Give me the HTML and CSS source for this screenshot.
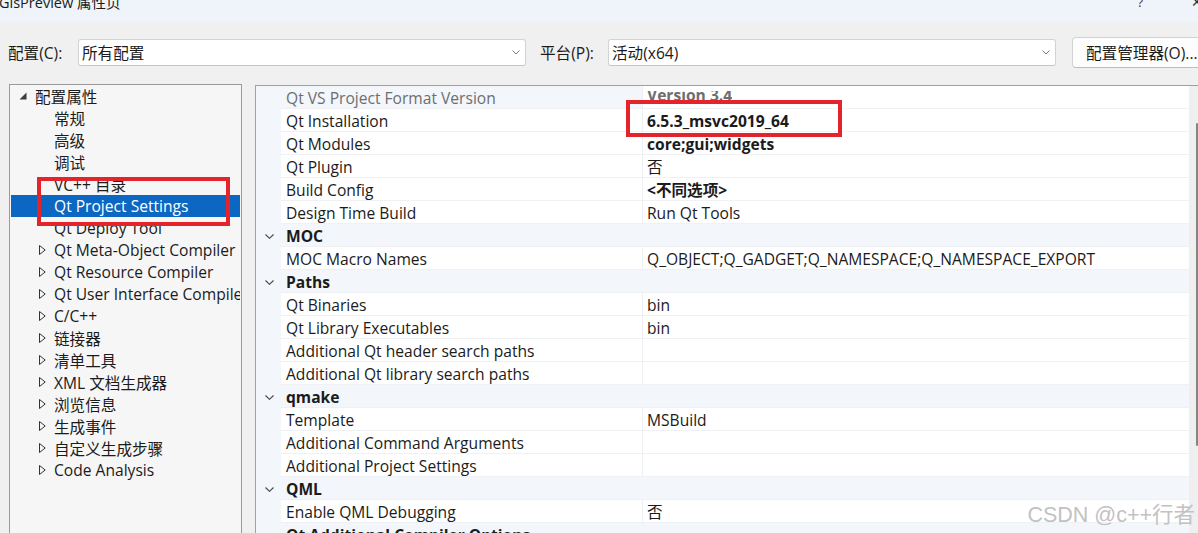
FILE: index.html
```html
<!DOCTYPE html>
<html lang="zh-CN">
<head>
<meta charset="utf-8">
<title>GisPreview 属性页</title>
<link rel="stylesheet" href="styles.css">
</head>
<body>
<div class="window">
  <div class="titlebar">
    <span class="title">GisPreview 属性页</span>
    <span class="help">?</span>
    <span class="close">✕</span>
  </div>

  <div class="toolbar">
    <span class="lbl lbl-config">配置(C):</span>
    <div class="combo">
      <span class="combo-text">所有配置</span>
      <svg class="chev" width="8" height="5" viewBox="0 0 8 5"><path d="M0.5 0.5 L4 4 L7.5 0.5" fill="none" stroke="#7a7a7a" stroke-width="1"/></svg>
    </div>
    <span class="lbl lbl-platform">平台(P):</span>
    <div class="combo">
      <span class="combo-text">活动(x64)</span>
      <svg class="chev" width="8" height="5" viewBox="0 0 8 5"><path d="M0.5 0.5 L4 4 L7.5 0.5" fill="none" stroke="#7a7a7a" stroke-width="1"/></svg>
    </div>
    <button class="btn">配置管理器(O)...</button>
  </div>

  <div class="main">
    <div class="tree">
      <div class="ti l0"><svg class="exp" width="8" height="8" viewBox="0 0 8 8"><polygon points="7.5,0.5 7.5,7.5 0.5,7.5" fill="#3c3c3c"/></svg>配置属性</div>
      <div class="ti l1">常规</div>
      <div class="ti l1">高级</div>
      <div class="ti l1">调试</div>
      <div class="ti l1">VC++ 目录</div>
      <div class="ti l1 sel">Qt Project Settings</div>
      <div class="ti l1">Qt Deploy Tool</div>
      <div class="ti col"><svg class="exp2" width="7" height="10" viewBox="0 0 7 10"><polygon points="0.5,0.5 6.2,5 0.5,9.5" fill="none" stroke="#333" stroke-width="1"/></svg>Qt Meta-Object Compiler</div>
      <div class="ti col"><svg class="exp2" width="7" height="10" viewBox="0 0 7 10"><polygon points="0.5,0.5 6.2,5 0.5,9.5" fill="none" stroke="#333" stroke-width="1"/></svg>Qt Resource Compiler</div>
      <div class="ti col"><svg class="exp2" width="7" height="10" viewBox="0 0 7 10"><polygon points="0.5,0.5 6.2,5 0.5,9.5" fill="none" stroke="#333" stroke-width="1"/></svg>Qt User Interface Compiler</div>
      <div class="ti col"><svg class="exp2" width="7" height="10" viewBox="0 0 7 10"><polygon points="0.5,0.5 6.2,5 0.5,9.5" fill="none" stroke="#333" stroke-width="1"/></svg>C/C++</div>
      <div class="ti col"><svg class="exp2" width="7" height="10" viewBox="0 0 7 10"><polygon points="0.5,0.5 6.2,5 0.5,9.5" fill="none" stroke="#333" stroke-width="1"/></svg>链接器</div>
      <div class="ti col"><svg class="exp2" width="7" height="10" viewBox="0 0 7 10"><polygon points="0.5,0.5 6.2,5 0.5,9.5" fill="none" stroke="#333" stroke-width="1"/></svg>清单工具</div>
      <div class="ti col"><svg class="exp2" width="7" height="10" viewBox="0 0 7 10"><polygon points="0.5,0.5 6.2,5 0.5,9.5" fill="none" stroke="#333" stroke-width="1"/></svg>XML 文档生成器</div>
      <div class="ti col"><svg class="exp2" width="7" height="10" viewBox="0 0 7 10"><polygon points="0.5,0.5 6.2,5 0.5,9.5" fill="none" stroke="#333" stroke-width="1"/></svg>浏览信息</div>
      <div class="ti col"><svg class="exp2" width="7" height="10" viewBox="0 0 7 10"><polygon points="0.5,0.5 6.2,5 0.5,9.5" fill="none" stroke="#333" stroke-width="1"/></svg>生成事件</div>
      <div class="ti col"><svg class="exp2" width="7" height="10" viewBox="0 0 7 10"><polygon points="0.5,0.5 6.2,5 0.5,9.5" fill="none" stroke="#333" stroke-width="1"/></svg>自定义生成步骤</div>
      <div class="ti col"><svg class="exp2" width="7" height="10" viewBox="0 0 7 10"><polygon points="0.5,0.5 6.2,5 0.5,9.5" fill="none" stroke="#333" stroke-width="1"/></svg>Code Analysis</div>
    </div>

    <div class="grid">
      <div class="rows">
        <div class="row first"><div class="gut"></div><div class="name">Qt VS Project Format Version</div><div class="val bold"><span class="clip">Version 3.4</span></div></div>
        <div class="row"><div class="gut"></div><div class="name">Qt Installation</div><div class="val bold">6.5.3_msvc2019_64</div></div>
        <div class="row"><div class="gut"></div><div class="name">Qt Modules</div><div class="val bold">core;gui;widgets</div></div>
        <div class="row"><div class="gut"></div><div class="name">Qt Plugin</div><div class="val">否</div></div>
        <div class="row"><div class="gut"></div><div class="name">Build Config</div><div class="val bold">&lt;不同选项&gt;</div></div>
        <div class="row"><div class="gut"></div><div class="name">Design Time Build</div><div class="val">Run Qt Tools</div></div>
        <div class="row cat"><div class="gut"><svg width="9" height="5" viewBox="0 0 9 5"><path d="M0.5 0.5 L4.5 4.3 L8.5 0.5" fill="none" stroke="#444" stroke-width="1.1"/></svg></div><div class="name">MOC</div></div>
        <div class="row"><div class="gut"></div><div class="name">MOC Macro Names</div><div class="val">Q_OBJECT;Q_GADGET;Q_NAMESPACE;Q_NAMESPACE_EXPORT</div></div>
        <div class="row cat"><div class="gut"><svg width="9" height="5" viewBox="0 0 9 5"><path d="M0.5 0.5 L4.5 4.3 L8.5 0.5" fill="none" stroke="#444" stroke-width="1.1"/></svg></div><div class="name">Paths</div></div>
        <div class="row"><div class="gut"></div><div class="name">Qt Binaries</div><div class="val">bin</div></div>
        <div class="row"><div class="gut"></div><div class="name">Qt Library Executables</div><div class="val">bin</div></div>
        <div class="row"><div class="gut"></div><div class="name">Additional Qt header search paths</div><div class="val"></div></div>
        <div class="row"><div class="gut"></div><div class="name">Additional Qt library search paths</div><div class="val"></div></div>
        <div class="row cat"><div class="gut"><svg width="9" height="5" viewBox="0 0 9 5"><path d="M0.5 0.5 L4.5 4.3 L8.5 0.5" fill="none" stroke="#444" stroke-width="1.1"/></svg></div><div class="name">qmake</div></div>
        <div class="row"><div class="gut"></div><div class="name">Template</div><div class="val">MSBuild</div></div>
        <div class="row"><div class="gut"></div><div class="name">Additional Command Arguments</div><div class="val"></div></div>
        <div class="row"><div class="gut"></div><div class="name">Additional Project Settings</div><div class="val"></div></div>
        <div class="row cat"><div class="gut"><svg width="9" height="5" viewBox="0 0 9 5"><path d="M0.5 0.5 L4.5 4.3 L8.5 0.5" fill="none" stroke="#444" stroke-width="1.1"/></svg></div><div class="name">QML</div></div>
        <div class="row"><div class="gut"></div><div class="name">Enable QML Debugging</div><div class="val">否</div></div>
        <div class="row cat"><div class="gut"><svg width="9" height="5" viewBox="0 0 9 5"><path d="M0.5 0.5 L4.5 4.3 L8.5 0.5" fill="none" stroke="#444" stroke-width="1.1"/></svg></div><div class="name">Qt Additional Compiler Options</div></div>
      </div>
      <div class="scrollbar"><div class="thumb"></div></div>
    </div>
  </div>

  <div class="mark mark-tree"></div>
  <div class="mark mark-value"></div>
  <div class="watermark">CSDN @c++行者</div>
</div>
</body>
</html>
```

FILE: styles.css
```css
* { box-sizing: border-box; }

html, body {
  margin: 0;
  padding: 0;
  background: #f0f0f0;
}

.window {
  position: relative;
  width: 1198px;
  height: 533px;
  overflow: hidden;
  background: #f0f0f0;
  font-family: "Open Sans", "Noto Sans CJK SC", sans-serif;
  font-size: 15.6px;
  color: #1b1b1b;
}

/* title bar */
.titlebar {
  height: 22px;
  background: #eef4f9;
  display: flex;
  align-items: flex-start;
  overflow: hidden;
}
.title {
  font-size: 14.5px;
  line-height: 18px;
  margin-top: -6px;
  margin-left: -1px;
  color: #1b1b1b;
}
.help {
  margin-left: auto;
  font-size: 13px;
  line-height: 18px;
  margin-top: -7px;
  color: #333;
}
.close {
  margin-left: 48px;
  margin-right: -5px;
  font-size: 14px;
  line-height: 18px;
  margin-top: -7px;
  color: #333;
}

/* toolbar */
.toolbar {
  height: 61px;
  display: flex;
  align-items: center;
  padding-left: 8px;
}
.lbl {
  flex: 0 0 auto;
  white-space: nowrap;
}
.lbl-config { width: 70px; }
.lbl-platform { width: 68px; margin-left: 14px; }
.combo {
  flex: 0 0 448px;
  height: 27px;
  background: #ffffff;
  border: 1px solid #d3d3d3;
  border-bottom-color: #c4c4c4;
  border-radius: 3px;
  display: flex;
  align-items: center;
  padding: 0 5px 0 3px;
}
.combo-text { flex: 1; white-space: nowrap; }
.chev { display: block; }
.btn {
  flex: 0 0 150px;
  margin-left: 16px;
  height: 31px;
  background: #fdfdfd;
  border: 1px solid #d2d2d2;
  border-bottom-color: #bdbdbd;
  border-radius: 4px;
  font: inherit;
  color: inherit;
  text-align: left;
  padding: 0 0 0 13px;
  white-space: nowrap;
}

/* main area */
.main {
  display: flex;
  align-items: flex-start;
  padding-left: 9px;
  padding-top: 1px;
}

.tree {
  flex: 0 0 233px;
  height: 460px;
  background: #f6f6f6;
  border: 1px solid #9a9a9a;
  padding: 0 1px;
  overflow: hidden;
}
.ti {
  height: 22px;
  display: flex;
  align-items: center;
  white-space: nowrap;
  overflow: hidden;
}
.ti.l0 { padding-left: 8px; }
.ti.l1 { padding-left: 43px; }
.ti.col { padding-left: 28px; }
.exp { margin-right: 8px; flex: 0 0 auto; margin-top: -1px; }
.exp2 { margin-right: 8px; flex: 0 0 auto; }
.ti.sel {
  background: #0b67c2;
  color: #ffffff;
}

/* property grid */
.grid {
  flex: 1;
  margin-left: 13px;
  margin-top: 1px;
  height: 460px;
  border-top: 1px solid #a0a0a0;
  border-left: 1px solid #a0a0a0;
  display: flex;
  overflow: hidden;
}
.rows {
  flex: 1;
  background: #ffffff;
}
.row {
  height: 23px;
  display: flex;
  align-items: stretch;
  white-space: nowrap;
  overflow: hidden;
}
.gut {
  flex: 0 0 25px;
  background: #f3f6fb;
  display: flex;
  align-items: center;
  justify-content: center;
  padding-left: 1px;
}
.gut svg { display: block; margin-top: 1px; }
.name {
  flex: 0 0 361px;
  display: flex;
  align-items: center;
  padding-left: 5px;
  padding-top: 1px;
  border-bottom: 1px solid #f0f1f4;
}
.val {
  flex: 1;
  display: flex;
  align-items: center;
  padding-left: 4px;
  padding-top: 1px;
  border-left: 1px solid #eeeff2;
  border-bottom: 1px solid #f0f1f4;
}
.bold { font-weight: 700; }

.row.first .name {
  background: #f3f6fb;
  color: #6e6e6e;
}
.row.first .val {
  color: #6e6e6e;
  align-items: flex-start;
  padding-top: 0;
}
.clip {
  display: block;
  height: 10px;
  line-height: 8.4px;
  margin-top: 5px;
  overflow: hidden;
}

.row.cat {
  background: #f3f6fb;
}
.row.cat .name {
  flex: 1;
  font-weight: 700;
  border-bottom: 1px solid #eef0f4;
}

.scrollbar {
  flex: 0 0 9px;
  background: #efefef;
  padding-top: 37px;
}
.thumb {
  width: 2px;
  height: 323px;
  margin-left: 7px;
  background: #858585;
  border-radius: 1px;
}

/* annotation overlays */
.mark {
  position: absolute;
  border: 4px solid #e4242a;
}
.mark-tree {
  left: 37px;
  top: 177px;
  width: 193px;
  height: 49px;
}
.mark-value {
  left: 626px;
  top: 100px;
  width: 216px;
  height: 37px;
}

.watermark {
  position: absolute;
  right: 3px;
  bottom: 5px;
  font-family: "Liberation Sans", "Noto Sans CJK SC", sans-serif;
  font-size: 21.5px;
  color: #c2c2c2;
  white-space: nowrap;
}
```
